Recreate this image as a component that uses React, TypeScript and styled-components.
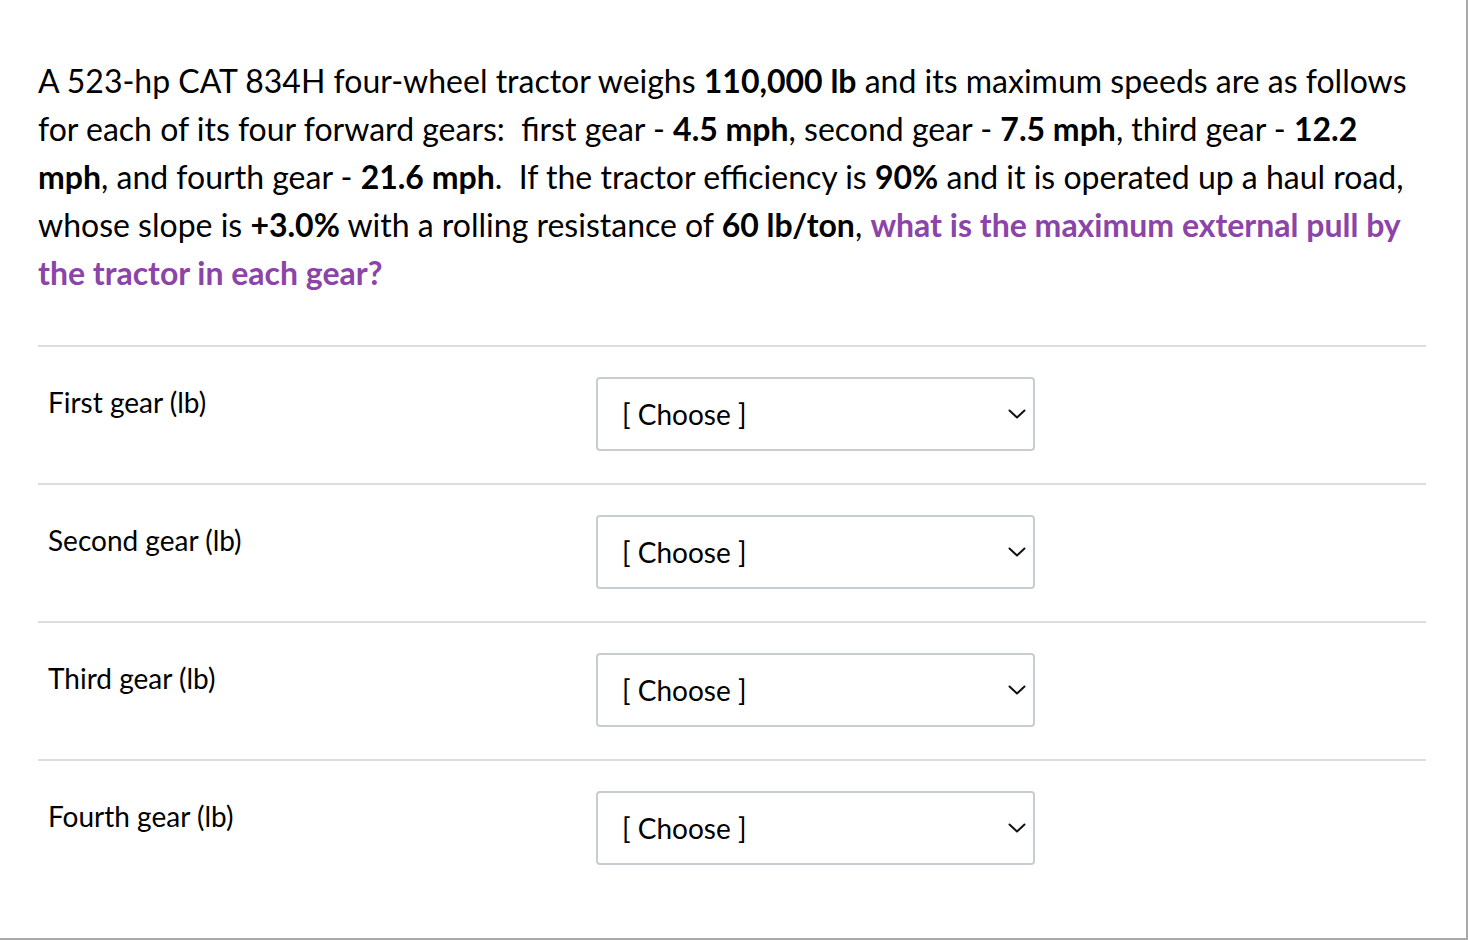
import React from 'react';
import styled, { createGlobalStyle } from 'styled-components';

const GlobalStyle = createGlobalStyle`
  html, body {
    margin: 0;
    padding: 0;
    background: #ffffff;
  }

  body {
    font-family: Lato, 'Open Sans', 'Liberation Sans', sans-serif;
    color: #000000;
  }
`;

const Page = styled.div`
  box-sizing: border-box;
  width: 1468px;
  height: 940px;
  border-right: 2px solid #a9a9a9;
  border-bottom: 2px solid #a9a9a9;
  padding: 57px 40px 0 38px;
`;

const Question = styled.p`
  margin: 0;
  font-size: 32px;
  line-height: 48px;
  white-space: nowrap;
  color: #000000;

  strong {
    font-weight: 700;
  }
`;

const Highlight = styled.strong`
  color: #8b44a8;
`;

const AnswerList = styled.div`
  margin-top: 48px;
  border-top: 2px solid #dddddd;
`;

const Row = styled.div`
  display: flex;
  align-items: flex-start;
  padding: 30px 0 32px;
  border-bottom: 2px solid #dddddd;

  &:last-child {
    border-bottom: none;
  }
`;

const Label = styled.div`
  width: 548px;
  padding: 7px 0 0 10px;
  font-size: 28px;
  line-height: 36px;
`;

const SelectBox = styled.div`
  box-sizing: border-box;
  width: 439px;
  height: 74px;
  display: flex;
  align-items: center;
  justify-content: space-between;
  padding: 0 7px 0 24px;
  border: 2px solid #c7cdd1;
  border-radius: 4px;
  font-size: 28px;
  color: #000000;
  background: #ffffff;
`;

const Chevron = () => (
  <svg width="18" height="12" viewBox="0 0 18 12" fill="none">
    <path d="M1.5 2.5 L9 9.5 L16.5 2.5" stroke="#111111" strokeWidth="2" strokeLinecap="round" strokeLinejoin="round" />
  </svg>
);

const gears = ['First gear (lb)', 'Second gear (lb)', 'Third gear (lb)', 'Fourth gear (lb)'];

export default function App() {
  return (
    <>
      <GlobalStyle />
      <Page>
        <Question>
          A 523-hp CAT 834H four-wheel tractor weighs <strong>110,000 lb</strong> and its maximum speeds are as follows
          <br />
          for each of its four forward gears:{'\u00a0'} first gear - <strong>4.5 mph</strong>, second gear - <strong>7.5 mph</strong>, third gear - <strong>12.2</strong>
          <br />
          <strong>mph</strong>, and fourth gear - <strong>21.6 mph</strong>.{'\u00a0'} If the tractor efficiency is <strong>90%</strong> and it is operated up a haul road,
          <br />
          whose slope is <strong>+3.0%</strong> with a rolling resistance of <strong>60 lb/ton</strong>, <Highlight>what is the maximum external pull by</Highlight>
          <br />
          <Highlight>the tractor in each gear?</Highlight>
        </Question>
        <AnswerList>
          {gears.map((g) => (
            <Row key={g}>
              <Label>{g}</Label>
              <SelectBox>
                <span>[ Choose ]</span>
                <Chevron />
              </SelectBox>
            </Row>
          ))}
        </AnswerList>
      </Page>
    </>
  );
}
